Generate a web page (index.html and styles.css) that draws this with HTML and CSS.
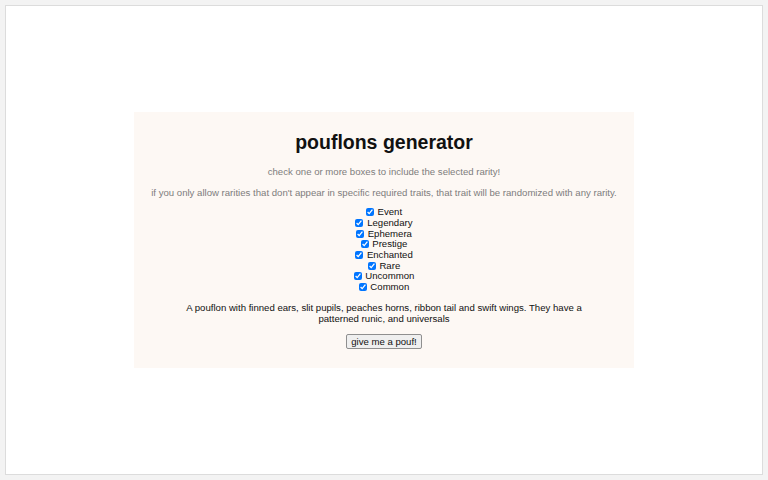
FILE: index.html
```html
<!DOCTYPE html>
<html lang="en">
<head>
    <meta charset="UTF-8">
    <meta name="viewport" content="width=device-width, initial-scale=1.0">
    <title>pouflons generator</title>
    <link rel="stylesheet" href="styles.css">
</head>
<body>

    <div class="frame">
        <div class="panel">
            <h1>pouflons generator</h1>
            <p class="hint">check one or more boxes to include the selected rarity!</p>
            <p class="hint">if you only allow rarities that don't appear in specific required traits, that trait will be randomized with any rarity.</p>

            <div class="rarities">
                <label><input type="checkbox" checked> Event</label>
                <label><input type="checkbox" checked> Legendary</label>
                <label><input type="checkbox" checked> Ephemera</label>
                <label><input type="checkbox" checked> Prestige</label>
                <label><input type="checkbox" checked> Enchanted</label>
                <label><input type="checkbox" checked> Rare</label>
                <label><input type="checkbox" checked> Uncommon</label>
                <label><input type="checkbox" checked> Common</label>
            </div>

            <p id="result" class="result">A pouflon with finned ears, slit pupils, peaches horns, ribbon tail and swift wings. They have a patterned runic, and universals</p>

            <button class="roll-btn">give me a pouf!</button>
        </div>
    </div>

</body>
</html>
```

FILE: styles.css
```css
* {
    box-sizing: border-box;
}
body {
    margin: 0;
    padding: 5px;
    height: 480px;
    background-color: #f3f3f3;
    font-family: "Liberation Sans", Arial, sans-serif;
    font-size: 9.6px;
    color: #111;
}
.frame {
    height: 470px;
    background: #fff;
    border: 1px solid #dcdcdc;
    display: flex;
    align-items: center;
    justify-content: center;
}
.panel {
    width: 500px;
    background: #fdf8f4;
    padding: 6px 8px 19px;
    text-align: center;
}
h1 {
    font-size: 19.5px;
    margin: 13px 0;
    line-height: 22px;
    color: #111;
}
p {
    margin: 9.6px 0;
    line-height: 11px;
}
.hint {
    color: #7d7d7d;
}
.rarities label {
    display: block;
    height: 10.7px;
    line-height: 10.7px;
}
.rarities input {
    width: 8px;
    height: 8px;
    margin: 0 1px 0 0;
    vertical-align: -1px;
}
.result {
    max-width: 420px;
    margin-left: auto;
    margin-right: auto;
}
.roll-btn {
    font-family: inherit;
    font-size: 9.6px;
    color: #111;
    background: #efefef;
    border: 1px solid #8f8f8f;
    border-radius: 2px;
    padding: 1px 4px;
    height: 15px;
    line-height: 11px;
}
```
